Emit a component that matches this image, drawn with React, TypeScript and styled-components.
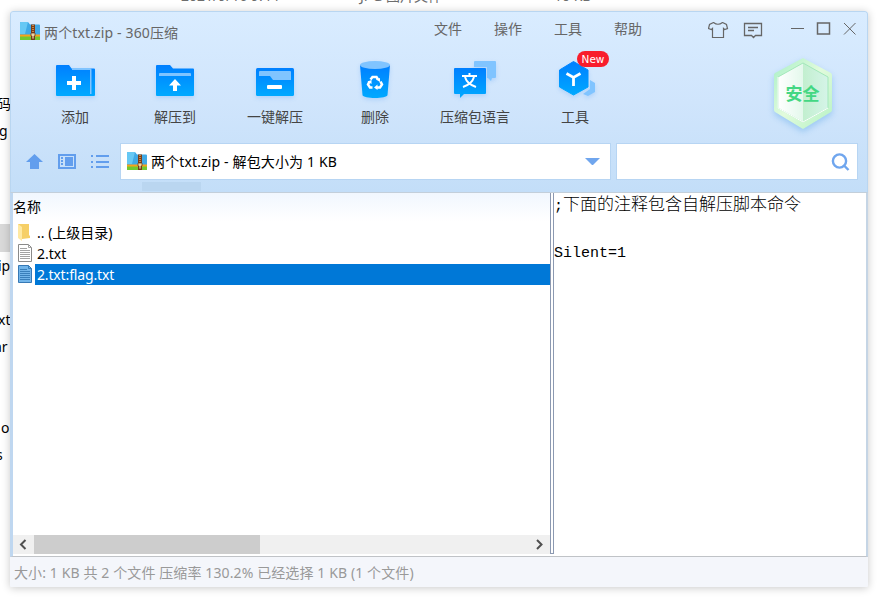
import React from 'react';
import styled, { createGlobalStyle } from 'styled-components';

const GlobalStyle = createGlobalStyle`
  * { box-sizing: border-box; }
  body { margin: 0; background: #fff; overflow: hidden; }
`;

const Desktop = styled.main`
  position: relative;
  width: 877px;
  height: 597px;
  padding: 11px 9px 10px 10px;
  overflow: hidden;
  background: #fff;
  font: 14px/20px "Noto Sans", "Noto Sans CJK SC", sans-serif;
  color: #000;
`;

const Behind = styled.span<{ $x: number; $y: number; $muted?: boolean }>`
  position: absolute;
  left: ${p => p.$x}px;
  top: ${p => p.$y}px;
  white-space: nowrap;
  color: ${p => (p.$muted ? '#6d6d6d' : '#000')};
`;

const BehindSelection = styled.i`
  position: absolute;
  left: 0;
  top: 224px;
  width: 10px;
  height: 28px;
  background: #d9d9d9;
`;

const Window = styled.section`
  position: relative;
  display: flex;
  flex-direction: column;
  width: 858px;
  height: 576px;
  border-radius: 3px 3px 1px 1px;
  box-shadow: 0 1px 9px rgba(0, 0, 0, 0.22);
  overflow: hidden;
  background: #f4f6fb;
`;

const Header = styled.header`
  flex: none;
  display: flex;
  flex-direction: column;
  height: 182px;
  border: 1px solid #b9d6f1;
  border-bottom: 1px solid #c3cfda;
  border-radius: 3px 3px 0 0;
  background: linear-gradient(#d9ecff, #d0e5fc 50%, #c3def8);
`;

const TitleBar = styled.div`
  display: flex;
  height: 43px;
  padding: 10px 0 0 9px;
  color: #666;
`;

const Title = styled.h1`
  width: 385px;
  margin: 1px 0 0 4px;
  font: inherit;
  letter-spacing: 0.14px;
  white-space: nowrap;
`;

const Menu = styled.nav`
  display: flex;
  width: 274px;
  gap: 32px;
  margin-top: -3px;
  margin-left: 5px;
`;

const WindowButtons = styled.div`
  display: flex;
  svg { display: block; }
`;

const Tools = styled.div`
  display: flex;
  height: 82px;
  padding-left: 14px;
`;

const Tool = styled.button`
  position: relative;
  flex: none;
  display: flex;
  flex-direction: column;
  align-items: center;
  gap: 6px;
  width: 100px;
  padding: 4px 0 0;
  border: 0;
  background: none;
  color: #444;
  font: inherit;
  svg { display: block; overflow: visible; filter: drop-shadow(0 2px 2px rgba(55, 140, 240, 0.22)); }
`;

const NewBadge = styled.b`
  position: absolute;
  left: 52px;
  top: -4px;
  width: 32px;
  height: 16px;
  border-radius: 8px;
  background: #f81d2c;
  color: #fff;
  font: 10.5px/17px "DejaVu Sans", sans-serif;
  text-align: center;
`;

const Safety = styled.div`
  position: relative;
  margin: 2px 0 0 143px;
  width: 70px;
  height: 78px;
  svg { display: block; overflow: visible; filter: drop-shadow(0 3px 3px rgba(80, 160, 230, 0.4)); }
`;

const SafetyText = styled.b`
  position: absolute;
  inset: 25px 1px auto 0;
  text-align: center;
  font-size: 17px;
  line-height: 24px;
  color: #43d783;
`;

const AddressRow = styled.div`
  flex: none;
  display: flex;
  align-items: center;
  height: 37px;
  margin-top: 6px;
  padding-left: 14px;
`;

const ViewButtons = styled.div`
  flex: none;
  display: flex;
  width: 95px;
  svg { display: block; }
`;

const Field = styled.div<{ $width: number; $end: number }>`
  flex: none;
  display: flex;
  align-items: center;
  width: ${p => p.$width}px;
  height: 37px;
  margin-right: 5px;
  padding: 0 ${p => p.$end}px 0 6px;
  border: 1px solid #b7d5f3;
  background: #fff;
  white-space: nowrap;
  letter-spacing: 0.14px;
  > span { margin-left: 4px; }
  > svg:last-child { margin-left: auto; }
`;

const DropTab = styled.div`
  flex: none;
  width: 59px;
  height: 9px;
  margin: 2px 0 0 131px;
  background: #bad6f0;
`;

const Body = styled.div`
  flex: none;
  display: flex;
  height: 364px;
  padding-bottom: 2px;
  border-style: solid;
  border-color: #bfd7f0 #c5d5e5 #c0c3c7 #bfd7f0;
  border-width: 0 2px 1px 3px;
  background: #fff;
`;

const FilePane = styled.div`
  display: flex;
  flex-direction: column;
  width: 537px;
`;

const ColumnHead = styled.div`
  height: 29px;
  padding-top: 4px;
  background: linear-gradient(#f1f7fe, #fff);
`;

const FileRow = styled.div<{ $selected?: boolean }>`
  display: flex;
  height: 21px;
  svg { flex: none; margin: 0 0 0 5px; }
  span {
    flex: 1;
    margin-left: 1px;
    padding-left: 2px;
    line-height: 21px;
    white-space: nowrap;
    background: ${p => (p.$selected ? '#0078d7' : 'transparent')};
    color: ${p => (p.$selected ? '#fff' : '#000')};
    letter-spacing: ${p => (p.$selected ? '-0.15px' : 'normal')};
  }
`;

const ScrollBar = styled.div`
  display: flex;
  align-items: center;
  justify-content: space-between;
  height: 19px;
  margin-top: auto;
  background: #f0f0f0;
`;

const Thumb = styled.div`
  width: 226px;
  height: 19px;
  margin-right: auto;
  background: #cdcdcd;
`;

const Splitter = styled.div`
  width: 4px;
  border: 1px solid #8c99b1;
  border-top: 0;
`;

const Comment = styled.pre`
  margin: -2px 0 0;
  font: 15px/23.5px "Liberation Mono", monospace;
  span { font: 300 17px/23.5px "Noto Sans CJK SC", sans-serif; }
`;

const Status = styled.footer`
  padding: 6px 0 0 4px;
  color: #999;
  letter-spacing: 0.11px;
  white-space: nowrap;
`;

const ArchiveIcon = () => (
  <svg width="20" height="19" viewBox="0 0 20 19">
    <path d="M0 1Q0 0 1 0h7l2 2.500h9q1 0 1 1V13H0z" fill="#3fa9e6" />
    <path d="M0 1Q0 0 1 0h7L5 12H0z" fill="#66c8f4" />
    <path d="M0 14h20v4H0z" fill="#72c831" />
    <path d="M0 12.500h20v2H0z" fill="#f9a21b" />
    <path d="M11 2.500h4V18h-4z" fill="#7b3d18" />
    <path d="M13 3v8" stroke="#c78743" strokeDasharray="1 1" strokeWidth="2" />
    <path d="M11 11h4v3h-1v3h-2v-3h-1z" fill="#efd6a0" stroke="#69351b" strokeWidth=".7" />
  </svg>
);

const Blue = ({ id }: { id: string }) => (
  <defs>
    <linearGradient id={id} x1="0" y1="0" x2="0" y2="1">
      <stop stopColor="#007fff" />
      <stop offset="1" stopColor="#00a9ff" />
    </linearGradient>
  </defs>
);

const AddIcon = () => (
  <svg width="40" height="42" viewBox="0 0 40 42">
    <Blue id="add" />
    <path d="M1 7q0-1 1-1h12l2.500 3.500H39q1 0 1 1V36q0 1-1 1H2q-1 0-1-1z" fill="url(#add)" />
    <path d="M17 9h18q1.500 0 1.500 1.500V35h-1.500V11H17z" fill="#80c4ff" />
    <path d="M12 24h14M19 17v14" stroke="#fff" strokeWidth="4" />
  </svg>
);

const ExtractToIcon = () => (
  <svg width="38" height="42" viewBox="0 0 38 42">
    <Blue id="to" />
    <path d="M0 7q0-1 1-1h13l3 3.500h20q1 0 1 1V36q0 1-1 1H1q-1 0-1-1z" fill="url(#to)" />
    <path d="M3 17v-2q0-1 1-1h30q1 0 1 1v2z" fill="#80c4ff" />
    <path d="M19 20l6 6.500h-4V32h-4v-5.500h-4z" fill="#fff" />
  </svg>
);

const OneClickIcon = () => (
  <svg width="38" height="42" viewBox="0 0 38 42">
    <Blue id="one" />
    <rect y="9" width="38" height="28" rx="1.500" fill="url(#one)" />
    <path d="M3 13q0-1 1-1h30q1 0 1 1v8H17l-3-4H3z" fill="#80c4ff" />
    <rect x="11" y="26" width="15" height="4" rx="1" fill="#fff" />
  </svg>
);

const DeleteIcon = () => (
  <svg width="30" height="42" viewBox="0 0 30 42">
    <Blue id="del" />
    <path d="M0 6h30l-2.500 30c-.5 4-24.500 4-25 0z" fill="url(#del)" />
    <ellipse cx="15" cy="6" rx="15" ry="4" fill="#80c4ff" />
    <g fill="none" stroke="#fff" strokeWidth="2.500">
      <path d="M10.500 20.500l2-2.500h4l1.500 2.500M20.500 22.500l1.500 3-2 3h-3M12.500 28.500h-2.500l-2-3 1.500-3" />
    </g>
    <path d="M16 20.500l4-1.500v4zM17.500 25.500v5.500l-3.500-2.500zM7.500 22.500l4-1.500v4z" fill="#fff" />
  </svg>
);

const LanguageIcon = () => (
  <svg width="42" height="42" viewBox="0 0 42 42">
    <Blue id="lang" />
    <path d="M20 3q0-1 1-1h20q1 0 1 1v15q0 1-1 1h-3l-1 3-3-3h-1V8H20z" fill="#80c4ff" />
    <path d="M0 10q0-1 1-1h30q1 0 1 1v24q0 1-1 1H10l-4 4v-4H1q-1 0-1-1z" fill="url(#lang)" />
    <path d="M8 17h15M15.500 14v3M11 18q2 7 11 10M20 18q-2 7-11 10" fill="none" stroke="#fff" strokeWidth="2" />
  </svg>
);

const ToolIcon = () => (
  <svg width="38" height="42" viewBox="0 0 38 42">
    <Blue id="tool" />
    <path d="M34 21l5 3v9l-7 4-5-2 7-5z" fill="#80c4ff" />
    <path d="M17.500 2.500l14.500 8.500v17l-14.500 8L3.500 28V11z" fill="url(#tool)" stroke="url(#tool)" strokeLinejoin="round" />
    <path d="M10.500 14.500l7 4 7-4M17.500 18v9" fill="none" stroke="#fff" strokeWidth="2.800" />
  </svg>
);

const SafetyIcon = () => (
  <svg width="70" height="76" viewBox="0 0 70 76">
    <defs>
      <linearGradient id="shield" x2="1" y2="1">
        <stop stopColor="#a7efc7" /><stop offset=".48" stopColor="#e2fbdc" /><stop offset="1" stopColor="#b4f2c4" />
      </linearGradient>
      <linearGradient id="facet">
        <stop stopColor="#fff" /><stop offset=".49" stopColor="#e4f8ec" /><stop offset=".5" stopColor="#c2efcf" /><stop offset="1" stopColor="#d5f4e8" />
      </linearGradient>
    </defs>
    <path d="M35 1l28 15q1 1 1 2v35q0 1-1 2L35 72 7 55q-1-1-1-2V18q0-1 1-2z" fill="url(#shield)" />
    <path d="M35 6l25 14v31L35 65 10 51V20z" fill="url(#facet)" stroke="#a3e8bb" />
    <path d="M10 20v31l25 14 25-14" fill="none" stroke="#fff" />
  </svg>
);

const PageIcon = ({ selected }: { selected?: boolean }) => (
  <svg width="16" height="21" viewBox="0 0 16 21">
    <path d="M.500 1.500h10l3 3v14H.500z" fill={selected ? '#72b5ea' : '#fff'} stroke={selected ? '#3779b5' : '#8a8a8a'} />
    <path d="M10.500 1.500v3h3M2 5.500h7M2 7.500h10M2 9.500h10M2 11.500h10M2 13.500h10M2 15.500h10" fill="none" stroke={selected ? '#397fba' : '#a2a2a2'} />
  </svg>
);

const tools = [
  ['添加', AddIcon], ['解压到', ExtractToIcon], ['一键解压', OneClickIcon],
  ['删除', DeleteIcon], ['压缩包语言', LanguageIcon], ['工具', ToolIcon],
] as const;

export default function App() {
  return (
    <>
      <GlobalStyle />
      <Desktop>
        <Behind $x={181} $y={-14} $muted>2021/9/16 9:44</Behind>
        <Behind $x={360} $y={-14} $muted>JPG 图片文件</Behind>
        <Behind $x={554} $y={-14} $muted>10 KB</Behind>
        <BehindSelection />
        <Behind $x={-3} $y={94}>码</Behind>
        <Behind $x={-1} $y={121}>g</Behind>
        <Behind $x={-2} $y={256}>ip</Behind>
        <Behind $x={-2} $y={310}>xt</Behind>
        <Behind $x={-6} $y={337}>ar</Behind>
        <Behind $x={1} $y={418}>o</Behind>
        <Behind $x={-4} $y={445}>s</Behind>
        <Window>
          <Header>
            <TitleBar>
              <ArchiveIcon />
              <Title>两个txt.zip - 360压缩</Title>
              <Menu><span>文件</span><span>操作</span><span>工具</span><span>帮助</span></Menu>
              <WindowButtons>
                <svg width="150" height="18" viewBox="0 0 150 18" fill="none" stroke="#666">
                  <path d="M5.500 .500Q10 4 14.500 .500l4 2 1 4-3 1-1-1v9h-11V6.500l-1 1-3-1 1-4z" strokeWidth="1.200" />
                  <path d="M36.500 1.500h17v12h-6l-2 2-2-2h-7zM40 5.500h10M40 8.500h6" strokeWidth="1.300" />
                  <path d="M83 6.500h13" />
                  <path d="M109.500 1h12v11h-12z" strokeWidth="1.500" />
                  <path d="M136 1l11.500 11.500M147.500 1L136 12.500" />
                </svg>
              </WindowButtons>
            </TitleBar>
            <Tools>
              {tools.map(([name, Icon]) => (
                <Tool key={name}>
                  <Icon />
                  {Icon === ToolIcon && <NewBadge>New</NewBadge>}
                  <span>{name}</span>
                </Tool>
              ))}
              <Safety><SafetyIcon /><SafetyText>安全</SafetyText></Safety>
            </Tools>
            <AddressRow>
              <ViewButtons>
                <svg width="84" height="18" viewBox="0 0 84 18" fill="#629eed">
                  <path d="M9.500 1l8.500 8h-4v7H5V9H1z" />
                  <path d="M34 2h16v13H34z" fill="none" stroke="#629eed" strokeWidth="2" />
                  <path d="M40 4h8v9h-8zM36 4h2v2h-2zM36 7h2v2h-2zM36 10h2v2h-2z" />
                  <path d="M66 2h2v2h-2zM71 2h13v2H71zM66 8h2v2h-2zM71 8h13v2H71zM66 13h2v2h-2zM71 13h13v2H71z" />
                </svg>
              </ViewButtons>
              <Field $width={491} $end={10}>
                <ArchiveIcon /><span>两个txt.zip - 解包大小为 1 KB</span>
                <svg width="15" height="7" viewBox="0 0 15 7"><path d="M0 0h15L8 7H7z" fill="#70a6ee" /></svg>
              </Field>
              <Field $width={242} $end={7}>
                <svg width="19" height="18" viewBox="0 0 19 18" fill="none" stroke="#70a6ee" strokeWidth="2.400">
                  <circle cx="8.500" cy="8" r="6.600" /><path d="M12.500 12l5 5" />
                </svg>
              </Field>
            </AddressRow>
            <DropTab />
          </Header>
          <Body>
            <FilePane>
              <ColumnHead>名称</ColumnHead>
              <FileRow>
                <svg width="16" height="21" viewBox="0 0 16 21">
                  <path d="M0 2h11v11l1 1v2l-8 1-4-2z" fill="#f6cf66" />
                  <path d="M0 2l4 3v14l-4-3z" fill="#ffe9a2" />
                </svg>
                <span>.. (上级目录)</span>
              </FileRow>
              <FileRow><PageIcon /><span>2.txt</span></FileRow>
              <FileRow $selected><PageIcon selected /><span>2.txt:flag.txt</span></FileRow>
              <ScrollBar>
                <svg width="21" height="19" fill="none" stroke="#505050" strokeWidth="2"><path d="M12.500 5L8 9.500l4.500 4.500" /></svg>
                <Thumb />
                <svg width="21" height="19" fill="none" stroke="#505050" strokeWidth="2"><path d="M8 5l4.500 4.500L8 14" /></svg>
              </ScrollBar>
            </FilePane>
            <Splitter />
            <Comment>;<span>下面的注释包含自解压脚本命令</span>{'\n\nSilent=1'}</Comment>
          </Body>
          <Status>大小: 1 KB 共 2 个文件 压缩率 130.2% 已经选择 1 KB (1 个文件)</Status>
        </Window>
      </Desktop>
    </>
  );
}
